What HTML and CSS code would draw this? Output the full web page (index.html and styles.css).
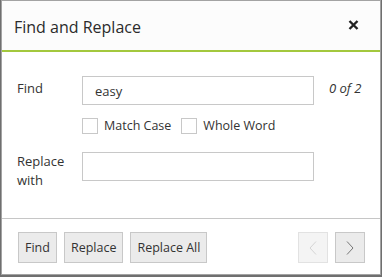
FILE: index.html
```html
<!DOCTYPE html>
<html lang="en">
<head>
    <meta charset="UTF-8">
    <title>Find and Replace</title>
    <link rel="stylesheet" href="styles.css">
</head>
<body>

    <div class="dialog">
        <div class="header">
            <h1>Find and Replace</h1>
            <button class="close" title="Close">
                <svg width="11" height="10" viewBox="0 0 11 10"><path d="M1.5 1 L9.5 9 M9.5 1 L1.5 9" stroke="#222" stroke-width="2.4" fill="none"/></svg>
            </button>
        </div>

        <div class="content">
            <div class="row">
                <label for="find">Find</label>
                <input type="text" id="find" value="easy">
                <span class="count">0 of 2</span>
            </div>
            <div class="options">
                <label class="check"><span class="box"></span>Match Case</label>
                <label class="check"><span class="box"></span>Whole Word</label>
            </div>
            <div class="row replace-row">
                <label for="replace">Replace with</label>
                <input type="text" id="replace">
            </div>
        </div>

        <div class="footer">
            <button class="btn">Find</button>
            <button class="btn">Replace</button>
            <button class="btn">Replace All</button>
            <div class="nav">
                <button class="btn arrow" disabled>
                    <svg width="8" height="14" viewBox="0 0 8 14"><path d="M7 0.5 L1 7 L7 13.5" stroke="#d4d4d4" fill="none"/></svg>
                </button>
                <button class="btn arrow">
                    <svg width="8" height="14" viewBox="0 0 8 14"><path d="M1 0.5 L7 7 L1 13.5" stroke="#777" fill="none"/></svg>
                </button>
            </div>
        </div>
    </div>

</body>
</html>
```

FILE: styles.css
```css
* {
    margin: 0;
    padding: 0;
    box-sizing: border-box;
}
body {
    background: #6f6f6f;
    font-family: "Open Sans", "Noto Sans", sans-serif;
    color: #333;
}
.dialog {
    margin-left: 1px;
    width: 380px;
    height: 275px;
    background: #fff;
    border: 1px solid #a3a3a3;
    display: flex;
    flex-direction: column;
}
.header {
    height: 51px;
    display: flex;
    align-items: center;
    justify-content: space-between;
    padding: 2px 21px 0 12px;
    border-bottom: 2px solid #a3c83e;
    background: #fcfcfc;
}
h1 {
    font-size: 16px;
    font-weight: normal;
    color: #2b2b2b;
}
.close {
    border: none;
    background: none;
    display: flex;
    margin-top: -3px;
}
.content {
    flex: 1;
    padding: 24px 15px 0 15px;
    border-bottom: 1px solid #c6c6c6;
}
.row {
    display: flex;
    align-items: flex-start;
}
.row label {
    width: 65px;
    font-size: 13px;
    line-height: 19px;
    padding-top: 3px;
}
input {
    width: 232px;
    height: 29px;
    border: 1px solid #c8c8c8;
    padding: 0 12px;
    font-family: inherit;
    font-size: 13px;
    color: #333;
    outline: none;
}
.count {
    margin-left: 15px;
    font-size: 13px;
    font-style: italic;
    padding-top: 3px;
}
.options {
    display: flex;
    gap: 10px;
    margin: 13px 0 0 65px;
}
.check {
    display: flex;
    align-items: center;
    font-size: 12.5px;
    line-height: 16px;
}
.box {
    width: 16px;
    height: 16px;
    border: 1px solid #c8c8c8;
    margin-right: 6px;
}
.replace-row {
    margin-top: 18px;
}
.replace-row label {
    padding-top: 0;
}
.footer {
    display: flex;
    gap: 7px;
    padding: 13px 15px 11px 16px;
}
.btn {
    height: 31px;
    padding: 0 6px;
    background: #ebebeb;
    border: 1px solid #c8c8c8;
    font-family: inherit;
    font-size: 12.5px;
    color: #333;
}
.nav {
    margin-left: auto;
    display: flex;
    gap: 7px;
}
.arrow {
    width: 30px;
    display: flex;
    align-items: center;
    justify-content: center;
}
.arrow:disabled {
    background: #f4f4f4;
    border-color: #e2e2e2;
}
```
